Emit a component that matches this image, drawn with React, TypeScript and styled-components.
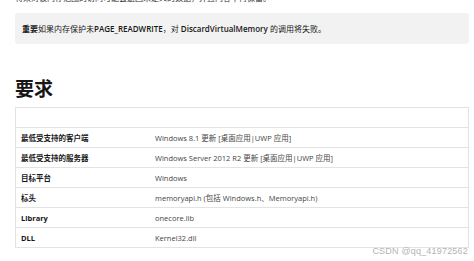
import * as React from 'react';
import styled, { createGlobalStyle } from 'styled-components';

const GlobalStyle = createGlobalStyle`
  html, body {
    margin: 0;
    padding: 0;
    background: #fff;
  }
  body {
    font-family: "Open Sans", "Noto Sans CJK SC", sans-serif;
    color: #171717;
  }
`;

const Page = styled.div`
  position: relative;
  width: 474px;
  height: 261px;
  overflow: hidden;
  padding: 0 5px 0 15px;
  box-sizing: border-box;
`;

const CutLine = styled.p`
  margin: -8px 0 0;
  height: 12px;
  line-height: 12px;
  font-size: 8px;
  color: #333;
  white-space: nowrap;
`;

const Note = styled.div`
  margin-top: 9px;
  height: 31px;
  display: flex;
  align-items: center;
  padding: 0 7px;
  background: #f2f2f2;
  border-radius: 3px;
  font-size: 8px;
  color: #171717;
`;

const Strong = styled.b`
  font-weight: 600;
`;

const Heading = styled.h2`
  margin: 32px 0 0;
  font-size: 19px;
  line-height: 24px;
  font-weight: 700;
  font-family: "Noto Sans CJK SC", sans-serif;
  color: #171717;
`;

const Table = styled.table`
  margin-top: 7px;
  width: 454px;
  border-collapse: collapse;
  border: 1px solid #e3e3e3;
  font-size: 7.5px;
`;

const Row = styled.tr`
  height: 20px;
  border-top: 1px solid #e3e3e3;
`;

const Cell = styled.td<{ $head?: boolean }>`
  padding: 0 0 0 5px;
  width: ${p => (p.$head ? '129px' : 'auto')};
  font-weight: ${p => (p.$head ? 700 : 400)};
  color: ${p => (p.$head ? '#171717' : '#454545')};
  white-space: nowrap;
  vertical-align: middle;
`;

const Watermark = styled.div`
  position: absolute;
  right: 6px;
  bottom: 5px;
  font-family: "Liberation Sans", sans-serif;
  font-size: 9px;
  letter-spacing: 0.2px;
  color: #b4b4b4;
`;

const rows: [string, string][] = [
  ['最低受支持的客户端', 'Windows 8.1 更新 [桌面应用|UWP 应用]'],
  ['最低受支持的服务器', 'Windows Server 2012 R2 更新 [桌面应用|UWP 应用]'],
  ['目标平台', 'Windows'],
  ['标头', 'memoryapi.h (包括 Windows.h、Memoryapi.h)'],
  ['Library', 'onecore.lib'],
  ['DLL', 'Kernel32.dll'],
];

export default function App() {
  return (
    <Page>
      <GlobalStyle />
      <CutLine>将来对该内存范围的访问可能会返回未定义的数据，并且内容不再保留。</CutLine>
      <Note>
        <span>
          <Strong>重要</Strong>如果内存保护未<Strong>PAGE_READWRITE</Strong>，对 <Strong>DiscardVirtualMemory</Strong> 的调用将失败。
        </span>
      </Note>
      <Heading>要求</Heading>
      <Table>
        <tbody>
          <Row>
            <Cell $head />
            <Cell />
          </Row>
          {rows.map(([k, v]) => (
            <Row key={k}>
              <Cell $head>{k}</Cell>
              <Cell>{v}</Cell>
            </Row>
          ))}
        </tbody>
      </Table>
      <Watermark>CSDN @qq_41972562</Watermark>
    </Page>
  );
}
